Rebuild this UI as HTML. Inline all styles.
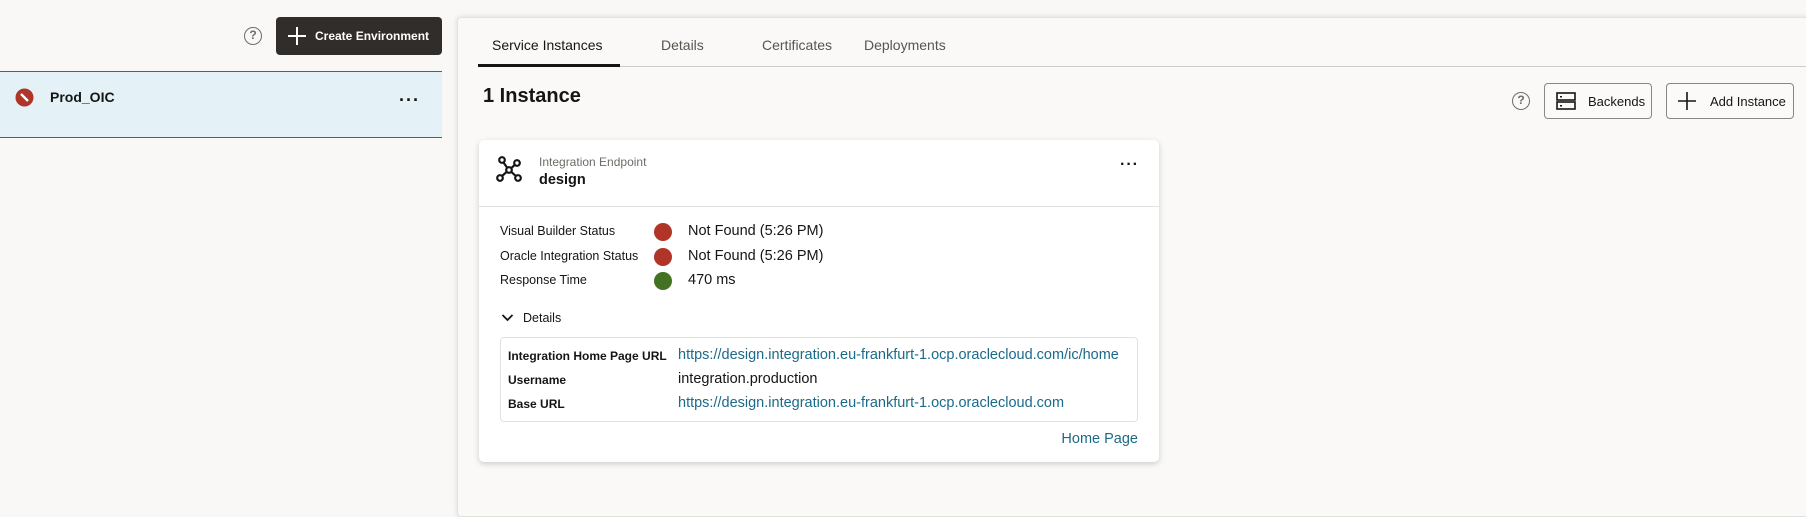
<!DOCTYPE html>
<html><head><meta charset="utf-8"><style>
*{box-sizing:border-box;margin:0;padding:0}
body{width:1806px;height:502px;overflow:hidden;background:#f9f8f6;font-family:"Liberation Sans",sans-serif;color:#161513;position:relative}
.abs{position:absolute;white-space:nowrap}
.btn{position:absolute;border:1px solid #8a8782;border-radius:4px;background:#fbfaf8;font-size:13px;display:flex;align-items:center;white-space:nowrap}
.help{position:absolute;width:18px;height:18px;border:1.6px solid #6f6c67;border-radius:50%;font-size:12px;font-weight:bold;color:#6f6c67;text-align:center;line-height:15px}
.lbl{position:absolute;font-size:12.5px;left:500px;white-space:nowrap}
.val{position:absolute;font-size:14.5px;left:688px;white-space:nowrap}
.dot{position:absolute;left:654px;width:18px;height:18px;border-radius:50%}
a{color:#1b6a89;text-decoration:none}
</style></head><body>
<div class="help" style="left:244px;top:27px">?</div>
<div class="abs" style="left:276px;top:17px;width:166px;height:38px;background:#312d2a;border-radius:4px;color:#fff;font-size:12px;font-weight:bold;display:flex;align-items:center">
<svg width="20" height="20" style="margin-left:11px;margin-right:8px" viewBox="0 0 20 20"><path d="M10 1v18M1 10h18" stroke="#fff" stroke-width="2"/></svg>Create Environment</div>
<div class="abs" style="left:0;top:71px;width:442px;height:67px;background:#e4f1f7;border-top:1.5px solid #2c6d8f;border-bottom:1.5px solid #2c6d8f"></div>
<svg class="abs" style="left:15px;top:88px" width="19" height="19" viewBox="0 0 19 19"><circle cx="9.5" cy="9.5" r="9" fill="#b03427"/><path d="M6 6l7 7" stroke="#fff" stroke-width="2.4"/></svg>
<div class="abs" style="left:50px;top:89px;font-size:14px;font-weight:bold">Prod_OIC</div>
<div class="abs" style="left:399px;top:90px;font-size:18px;font-weight:bold;letter-spacing:1px">···</div>

<div class="abs" style="left:457px;top:17px;width:1360px;height:500px;background:#faf9f7;border:1px solid #e4e2df;border-radius:4px;box-shadow:0 0 6px rgba(0,0,0,.12)"></div>
<div class="abs" style="left:478px;top:66px;width:1328px;height:1px;background:#cfccc8"></div>
<div class="abs" style="left:478px;top:64px;width:142px;height:3px;background:#161513"></div>
<div class="abs" style="left:492px;top:37px;font-size:14px">Service Instances</div>
<div class="abs" style="left:661px;top:37px;font-size:14px;color:#58554f">Details</div>
<div class="abs" style="left:762px;top:37px;font-size:14px;color:#58554f">Certificates</div>
<div class="abs" style="left:864px;top:37px;font-size:14px;color:#58554f">Deployments</div>
<div class="abs" style="left:483px;top:85px;font-size:20px;font-weight:bold">1 Instance</div>

<div class="help" style="left:1512px;top:92px">?</div>
<div class="btn" style="left:1544px;top:83px;width:108px;height:36px">
<svg width="20" height="18" style="margin:0 12px 0 11px" viewBox="0 0 20 18"><rect x="1" y="1" width="18" height="7" fill="none" stroke="#161513" stroke-width="1.6"/><rect x="1" y="10" width="18" height="7" fill="none" stroke="#161513" stroke-width="1.6"/><rect x="4" y="4" width="2" height="1.5" fill="#161513"/><rect x="4" y="13" width="2" height="1.5" fill="#161513"/></svg>Backends</div>
<div class="btn" style="left:1666px;top:83px;width:128px;height:36px">
<svg width="18" height="18" style="margin:0 14px 0 11px" viewBox="0 0 18 18"><path d="M9 0v18M0 9h18" stroke="#161513" stroke-width="1.6"/></svg>Add Instance</div>

<div class="abs" style="left:479px;top:140px;width:680px;height:322px;background:#fff;border-radius:5px;box-shadow:0 2px 6px rgba(0,0,0,.18)"></div>
<div class="abs" style="left:479px;top:206px;width:680px;height:1px;background:#e4e2df"></div>
<svg class="abs" style="left:496px;top:156px" width="26" height="26" viewBox="0 0 26 26" fill="none" stroke="#161513" stroke-width="2.2"><circle cx="6" cy="4" r="2.8"/><circle cx="21" cy="7" r="2.8"/><circle cx="4" cy="22" r="2.8"/><circle cx="22" cy="22" r="2.8"/><circle cx="13" cy="14" r="2.8"/><path d="M7.5 6.5l3.5 5M18.8 8.8l-3.6 3.4M6 20l4.8-4.2M19.8 20l-4.6-4.2"/></svg>
<div class="abs" style="left:539px;top:155px;font-size:12px;color:#6f6c67">Integration Endpoint</div>
<div class="abs" style="left:539px;top:172px;font-size:14.5px;font-weight:bold">design</div>
<div class="abs" style="left:1120px;top:156px;font-size:16px;font-weight:bold;letter-spacing:1px">···</div>

<div class="lbl" style="top:224px">Visual Builder Status</div>
<div class="dot" style="top:223px;background:#b03427"></div>
<div class="val" style="top:223px">Not Found (5:26 PM)</div>
<div class="lbl" style="top:249px">Oracle Integration Status</div>
<div class="dot" style="top:248px;background:#b03427"></div>
<div class="val" style="top:248px">Not Found (5:26 PM)</div>
<div class="lbl" style="top:273px">Response Time</div>
<div class="dot" style="top:272px;background:#437222"></div>
<div class="val" style="top:272px">470 ms</div>

<svg class="abs" style="left:501px;top:313px" width="13" height="10" viewBox="0 0 13 10"><path d="M1.5 2l5 5 5-5" stroke="#161513" stroke-width="1.8" fill="none"/></svg>
<div class="abs" style="left:523px;top:311px;font-size:12.5px">Details</div>
<div class="abs" style="left:500px;top:337px;width:638px;height:85px;border:1px solid #e4e2df;border-radius:4px;background:#fff"></div>
<div class="abs" style="left:508px;top:349px;font-size:12px;font-weight:bold">Integration Home Page URL</div>
<div class="abs" style="left:678px;top:347px;font-size:14.5px"><a>https://design.integration.eu-frankfurt-1.ocp.oraclecloud.com/ic/home</a></div>
<div class="abs" style="left:508px;top:373px;font-size:12px;font-weight:bold">Username</div>
<div class="abs" style="left:678px;top:371px;font-size:14.5px">integration.production</div>
<div class="abs" style="left:508px;top:397px;font-size:12px;font-weight:bold">Base URL</div>
<div class="abs" style="left:678px;top:395px;font-size:14.5px"><a>https://design.integration.eu-frankfurt-1.ocp.oraclecloud.com</a></div>
<div class="abs" style="left:1000px;top:431px;width:138px;text-align:right;font-size:14.5px"><a>Home Page</a></div>
</body></html>
